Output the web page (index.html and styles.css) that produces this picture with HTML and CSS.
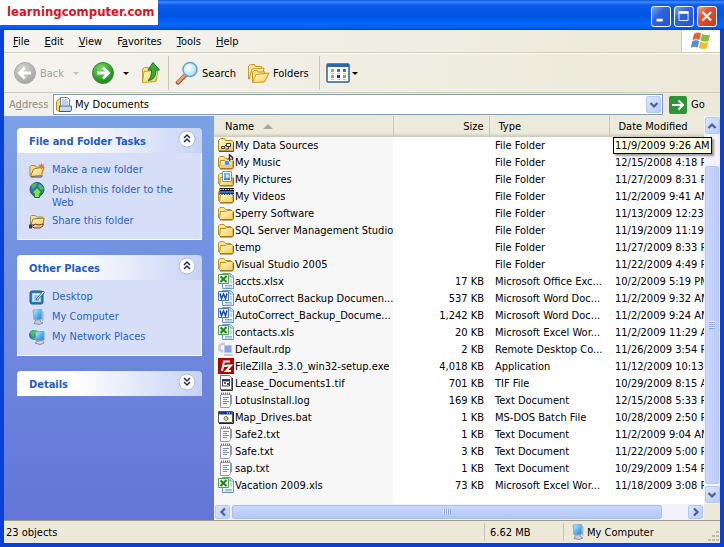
FILE: index.html
```html
<!DOCTYPE html>
<html lang="en">
<head>
<meta charset="utf-8">
<title>My Documents</title>
<link rel="stylesheet" href="styles.css">
</head>
<body>
<svg class="sprite" aria-hidden="true">
  <defs>
    <linearGradient id="gFold" x1="0" y1="0" x2="1" y2="1"><stop offset="0" stop-color="#fffbd0"/><stop offset="1" stop-color="#f3cb50"/></linearGradient>
    <radialGradient id="gGreen" cx=".4" cy=".3" r=".75"><stop offset="0" stop-color="#7fdc62"/><stop offset=".6" stop-color="#35a62c"/><stop offset="1" stop-color="#1d7d1c"/></radialGradient>
    <radialGradient id="gGray" cx=".4" cy=".3" r=".75"><stop offset="0" stop-color="#d4d4d2"/><stop offset="1" stop-color="#a2a2a0"/></radialGradient>
    <radialGradient id="gLens" cx=".4" cy=".4" r=".6"><stop offset="0" stop-color="#fff"/><stop offset="1" stop-color="#a5def5"/></radialGradient>
    <linearGradient id="gScr" x1="0" y1="0" x2="1" y2="1"><stop offset="0" stop-color="#c3f0ff"/><stop offset=".5" stop-color="#5ab8f0"/><stop offset="1" stop-color="#2273cf"/></linearGradient>
    <symbol id="folder" viewBox="0 0 16 16">
      <path d="M.5 13V4L2 2.500h4L7.500 4.500h5l1 1V7" fill="#fbe58c" stroke="#c39224"/>
      <path d="M1.500 14 2.500 6.500H8l1-1h5l1 1v7l-1 1H2z" fill="url(#gFold)" stroke="#b98a1e"/>
      <path d="M2 15h12.500l1-1.500V7" fill="none" stroke="#8a6a1b"/>
    </symbol>
    <symbol id="data" viewBox="0 0 16 16">
      <path d="M.5 13.500v-10l2-2h4l1 2h6l2 1.500v9z" fill="url(#gFold)" stroke="#a98620"/>
      <path d="M3.500 9.500h3v2h-3zM8.500 6.500h4v3h-4zM6.500 9.500 8.500 8M10.500 10v2h-3" fill="#fff" stroke="#333"/>
      <path d="M1 14.500h14.500V5" fill="none" stroke="#6d5413"/>
    </symbol>
    <symbol id="music" viewBox="0 0 16 16">
      <use href="#folder"/>
      <path d="M11.500 8V.8l3 2.500V6" fill="none" stroke="#28365f" stroke-width="1.500"/>
      <circle cx="9" cy="9" r="2.800" fill="#4b8de0" stroke="#d7e8ff"/><path d="M3 11h10v3H3z" fill="#f9c56e"/>
    </symbol>
    <symbol id="pics" viewBox="0 0 16 16">
      <use href="#folder"/>
      <path d="M4.500.5h9v10h-9z" fill="#fff" stroke="#6f95c4"/><path d="M6 2h6v6.500H6z" fill="#69b7ee"/><path d="M8 3.500h3v3H8z" fill="#d5ecff"/><path d="M6 7.500h6V9H6z" fill="#3e83b0"/>
    </symbol>
    <symbol id="video" viewBox="0 0 16 16">
      <use href="#folder"/>
      <path d="M1.500 0H16v7H1.500z" fill="#111"/><path d="M2 3h14v2.500H2z" fill="#3c6ec4"/><path d="M2 1.500h14M2 6.500h14" stroke="#fff" stroke-dasharray="1.500 1"/>
    </symbol>
    <symbol id="page" viewBox="0 0 16 16">
      <path d="M4.500.5h8l3 3v12h-11z" fill="#eef6ff" stroke="#6c96c8"/><path d="M12 .5V4h3.500" fill="#fff" stroke="#6c96c8"/>
      <path d="M12 7h2M12 9h2M7 12.500h7M7 14h7" stroke="#8fb0dc"/>
    </symbol>
    <symbol id="xls" viewBox="0 0 16 16"><use href="#page"/><path d="M.5 1.500h10v9H.5z" fill="#e3f6dc" stroke="#57a552"/><path d="M2.500 3.500 8.500 9M8.500 3 2.500 9" stroke="#23822b" stroke-width="2"/></symbol>
    <symbol id="doc" viewBox="0 0 16 16"><use href="#page"/><path d="M.5 1.500h10v9H.5z" fill="#e3eeff" stroke="#4c7cc4"/><path d="M2 3.500 3.500 8.500 5.500 4 7.500 8.500 9 3.500" fill="none" stroke="#214d9d" stroke-width="1.500"/></symbol>
    <symbol id="rdp" viewBox="0 0 16 16"><path d="M2 10C0 5 3 2 7 3M2 9l3 2" fill="none" stroke="#c9cfdf" stroke-width="3"/><path d="M6.500 4.500h7v7h-7z" fill="#8d9ff0" stroke="#b8c4ec"/><path d="M6 13h9v2H6z" fill="#c8cad5"/></symbol>
    <symbol id="fz" viewBox="0 0 16 16"><path d="M0 0h16v16H0z" fill="#b20000"/><path d="M4 13 6 3.500h6M5 8h4M8.500 7.500h4.500l-5 5.500h5" fill="none" stroke="#fff" stroke-width="2"/></symbol>
    <symbol id="tif" viewBox="0 0 16 16"><path d="M2.500.5h9l2 2v12h-11z" fill="#fff" stroke="#777"/><path d="M3 15.500h11.500V3" fill="none" stroke="#333"/><path d="M4 4h8v2H4z" fill="#173b9c"/><path d="M4.500 6h7v5h-7z" fill="#fff" stroke="#444"/><path d="M6 7h2v2H6z" fill="#d33"/><path d="M9 8h2v2H9z" fill="#24c"/></symbol>
    <symbol id="txt" viewBox="0 0 16 16"><path d="M2.500 2.500h10v11l-1.500 2H2.500z" fill="#f6fbff" stroke="#9a9ca0"/><path d="M3 1.500h10" stroke="#8a7a42" stroke-width="2" stroke-dasharray="1 1"/><path d="M5 5.500h6M5 7.500h4M5 9.500h6M5 11.500h4" stroke="#7d8fb0"/><path d="M13.500 3v9" stroke="#999"/></symbol>
    <symbol id="bat" viewBox="0 0 16 16"><path d="M.5 2.500h14v11H.5z" fill="#fff" stroke="#555"/><path d="M1 3h13v2.500H1z" fill="#17379d"/><path d="M9 4h1M11 4h1M13 4h.5" stroke="#fff"/><path d="M15.500 3v11.500H1" fill="none" stroke="#222"/><circle cx="8" cy="9.500" r="2" fill="#e9d96a" stroke="#444" stroke-dasharray="1.500 .5"/></symbol>
    <symbol id="newf" viewBox="0 0 16 16"><path d="M1 14V4.500l1-1h4l1 1.500h5V8" fill="#f8dc86" stroke="#b08a3c"/><path d="M1.500 14.500 4.500 7l10.500-2-2.500 8.500z" fill="url(#gFold)" stroke="#a1762c"/><path d="m12.500 1 .8 1.800 2.200-.3-1.200 1.800L15.500 6l-2.200-.1-.8 1.800-.9-1.800-2.100.1 1.200-1.700L9.500 2.500l2.200.3z" fill="#f0742e"/><path d="M2 15h10.500l1-1.500" fill="none" stroke="#544"/></symbol>
    <symbol id="globe" viewBox="0 0 16 16"><circle cx="8" cy="7.500" r="7" fill="#2b76c4" stroke="#20578f"/><path d="M2 4c2-3 4-3 6-3l-1 3-3 3zM10 2c3 1 4 3 5 5l-3 1-3-3z" fill="#51bd4b"/><path d="M8 5.500 13.500 11H11l-.5 4.500h-5L5 11H2.500z" fill="#7fe05a" stroke="#1d6f25"/></symbol>
    <symbol id="share" viewBox="0 0 16 16"><path d="M1.500 12V3.500l1-1h4l1 1.500h6V7" fill="#f9e19a" stroke="#a98a48"/><path d="M2 11.500 4 6l11-1-1 7z" fill="url(#gFold)" stroke="#98773a"/><path d="M1 13h3l2-2 4 1 4-1v2l-3 2H5l-1-1H1z" fill="#eec07d" stroke="#6a5336"/><path d="M0 11.500h3v4H0z" fill="#30405c"/></symbol>
    <symbol id="desk" viewBox="0 0 16 16"><rect x="1" y="2" width="13" height="13" rx="2" fill="#2c7db8" stroke="#1b5c8f"/><path d="M3.500 4.500h8v8h-8z" fill="#f4fbff" stroke="#a6d5ee"/><path d="M5 7h4M5 9h3M5 11h5" stroke="#4e8bb5"/><path d="M7 10.500 14 2l1.500 1.500-7 7.500z" fill="#fff" stroke="#31628a"/></symbol>
    <symbol id="comp" viewBox="0 0 16 16"><path d="M4 1 12.500.5 13 10l-8 1z" fill="url(#gScr)" stroke="#8fa9cb"/><path d="M13 1.500 14.500 3v8L13 12z" fill="#a8b0c5"/><path d="m7 11 4-.5.5 2L14 14l-4 1.500-5-1z" fill="#c9ccd8" stroke="#8b90a6"/></symbol>
    <symbol id="net" viewBox="0 0 16 16"><circle cx="5" cy="6" r="5" fill="#287dc5"/><path d="M1 4c2-3 5-4 7-2L6 5l-2 4zM3 10l3-2v3z" fill="#4cc04b"/><path d="m6 3 9-.5V11l-8 .5z" fill="url(#gScr)" stroke="#7e9cc0"/><path d="m9 12 4-.5L15 14l-4 1.500-5-1.500z" fill="#d6d8e0" stroke="#868ca4"/></symbol>
    <symbol id="mydocs" viewBox="0 0 16 16"><path d="M.5 13V4.500L2.500 2h4v12H2z" fill="#fbdc6c" stroke="#b28c2b"/><path d="M4.500.5h7l2 2V11h-9z" fill="#f4f8ff" stroke="#7187ad"/><path d="M6 3h5M6 5h6M6 7h6" stroke="#8ba6d6"/><path d="M3.500 14.500V9h12v4l-1.500 1.500z" fill="#c5d9f2" stroke="#47679b"/><path d="M3 14.500h11.500" stroke="#3d5486"/></symbol>
    <symbol id="up2" viewBox="0 0 18 18"><circle cx="9" cy="9" r="8" fill="#fff" stroke="#b3bbd8"/><path d="m6 8 3-3 3 3M6 12l3-3 3 3" fill="none" stroke="#1d2c5e" stroke-width="1.500"/></symbol>
    <symbol id="down2" viewBox="0 0 18 18"><circle cx="9" cy="9" r="8" fill="#fff" stroke="#b3bbd8"/><path d="m6 5 3 3 3-3M6 9l3 3 3-3" fill="none" stroke="#1d2c5e" stroke-width="1.500"/></symbol>
    <symbol id="chev" viewBox="0 0 10 10"><path d="m1.500 3 3.500 3.500L8.500 3" fill="none" stroke="#4d6185" stroke-width="2.200"/></symbol>
  </defs>
</svg>

<div class="window">
  <header class="titlebar">
    <strong class="brand">learningcomputer.com</strong>
    <div class="controls">
      <button class="ctl" aria-label="Minimize"><svg viewBox="0 0 20 20"><path d="M5 14h7" stroke="#fff" stroke-width="3"/></svg></button>
      <button class="ctl" aria-label="Maximize"><svg viewBox="0 0 20 20"><path d="M4.500 5h10v9.500h-10z" fill="none" stroke="#fff"/><path d="M4 5.500h11" stroke="#fff" stroke-width="3"/></svg></button>
      <button class="ctl close" aria-label="Close"><svg viewBox="0 0 20 20"><path d="m5 5 9.500 9.500M14.500 5 5 14.500" stroke="#fff" stroke-width="2.200"/></svg></button>
    </div>
  </header>

  <div class="frame">
    <nav class="menubar">
      <button><u>F</u>ile</button><button><u>E</u>dit</button><button><u>V</u>iew</button><button>F<u>a</u>vorites</button><button><u>T</u>ools</button><button><u>H</u>elp</button>
      <span class="flag"><svg viewBox="0 0 20 18"><path d="M3 2q4-2.500 7-.5L8.500 8Q5 6.500 1.500 8.300z" fill="#e9602e"/><path d="M11 2q4 2 8 .2L17.500 9q-4 1.500-8-.5z" fill="#86bd3c"/><path d="M1.200 9.300q4-2 7-.2L6.700 15.500q-3-1.800-7 .2z" fill="#4f8ee0"/><path d="M9.300 9.500q4 2 8 .5l-1.600 6.500q-4 1.600-8-.7z" fill="#f5be2c"/></svg></span>
    </nav>

    <div class="toolbar">
      <button class="tool back" disabled><svg class="round" viewBox="0 0 24 24"><circle cx="12" cy="12" r="10.500" fill="url(#gGray)" stroke="#a9a9a6"/><path d="M18 12H7m5-5.500L6.500 12l5.500 5.500" fill="none" stroke="#fff" stroke-width="2.800"/></svg>Back<i class="caret"></i></button>
      <button class="tool fwd" aria-label="Forward"><svg class="round" viewBox="0 0 24 24"><circle cx="12" cy="12" r="10.500" fill="url(#gGreen)" stroke="#338a30"/><path d="M6 12h11m-5-5.500 5.500 5.500-5.500 5.500" fill="none" stroke="#fff" stroke-width="2.800"/></svg><i class="caret"></i></button>
      <button class="tool up" aria-label="Up"><svg viewBox="0 0 22 24"><path d="M2.500 21V8l2-1.500h4l1 2h5" fill="#f9e48e" stroke="#c49d2c"/><path d="M2.500 21.500 4 10.500l14-1.500-2 11.500z" fill="url(#gFold)" stroke="#c49d2c"/><path d="M8 19.500q3.500-2 3.500-10.500H8l5-7.500 6.500 7.500H16q0 10-8 10.500z" fill="#36ab35" stroke="#17751c"/></svg></button>
      <i class="sep"></i>
      <button class="tool search"><svg viewBox="0 0 24 24"><path d="M3 21.500 10 14.500" stroke="#9d5a34" stroke-width="4.500" stroke-linecap="round"/><path d="M3 21 10 14" stroke="#e6a276" stroke-width="2.500" stroke-linecap="round"/><circle cx="15" cy="8.500" r="7" fill="url(#gLens)" stroke="#6f9fc9" stroke-width="1.500"/></svg>Search</button>
      <button class="tool folders"><svg viewBox="0 0 24 24"><path d="M2.500 18V5l2-1.500h4l1 2h6V9" fill="#fbe58c" stroke="#c79a2c"/><path d="M3 18.500 6 8l12-1-1 5" fill="url(#gFold)" stroke="#c79a2c"/><path d="M6.500 21V11L8 9.500h3l1 1.500h7v3" fill="#fbe58c" stroke="#c79a2c"/><path d="M6.500 21.500 10 13.500 23 12l-4.500 9z" fill="url(#gFold)" stroke="#c79a2c"/></svg>Folders</button>
      <i class="sep"></i>
      <button class="tool views" aria-label="Views"><svg viewBox="0 0 24 20"><rect x="1" y="1" width="22" height="18" rx="1" fill="#fff" stroke="#28629f" stroke-width="1.500"/><path d="M1 1h22v3H1z" fill="#2b66ae"/><path d="M5 6h3v3H5z" fill="#999fb8"/><path d="M11 6h3v3h-3z" fill="#3572c9"/><path d="M17 6h3v3h-3z" fill="#2f9635"/><path d="M5 12h3v3H5z" fill="#e58a69"/><path d="M11 12h3v3h-3z" fill="#32258f"/><path d="M17 12h3v3h-3z" fill="#b6a12f"/><path d="M5 10.500h3m3 0h3m3 0h3M5 16.500h3m3 0h3m3 0h3" stroke="#bcc3d4"/></svg><i class="caret"></i></button>
    </div>

    <form class="address">
      <label for="addr">A<u>d</u>dress</label>
      <div class="combo"><svg class="ico"><use href="#mydocs"/></svg><input id="addr" type="text" value="My Documents"><button type="button" class="sbtn" aria-label="Show history"><svg><use href="#chev"/></svg></button></div>
      <button type="button" class="go"><svg viewBox="0 0 18 18"><rect width="18" height="18" rx="2" fill="#2d9238"/><path d="M3 9h11M9.500 4.500 14 9l-4.500 4.500" fill="none" stroke="#fff" stroke-width="2"/></svg>Go</button>
    </form>

    <main class="content">
      <aside class="side">
        <section class="panel">
          <h2>File and Folder Tasks<button aria-label="Collapse"><svg><use href="#up2"/></svg></button></h2>
          <ul>
            <li><a href="#"><svg class="ico"><use href="#newf"/></svg>Make a new folder</a></li>
            <li><a href="#"><svg class="ico"><use href="#globe"/></svg>Publish this folder to the Web</a></li>
            <li><a href="#"><svg class="ico"><use href="#share"/></svg>Share this folder</a></li>
          </ul>
        </section>
        <section class="panel">
          <h2>Other Places<button aria-label="Collapse"><svg><use href="#up2"/></svg></button></h2>
          <ul>
            <li><a href="#"><svg class="ico"><use href="#desk"/></svg>Desktop</a></li>
            <li><a href="#"><svg class="ico"><use href="#comp"/></svg>My Computer</a></li>
            <li><a href="#"><svg class="ico"><use href="#net"/></svg>My Network Places</a></li>
          </ul>
        </section>
        <section class="panel">
          <h2>Details<button aria-label="Expand"><svg><use href="#down2"/></svg></button></h2>
        </section>
      </aside>

      <div class="list">
        <div class="view">
          <table>
            <colgroup><col class="c-name"><col class="c-size"><col class="c-type"><col></colgroup>
            <thead><tr><th>Name<i class="sort"></i></th><th>Size</th><th>Type</th><th>Date Modified</th></tr></thead>
            <tbody>
              <tr><td><svg class="ico"><use href="#data"/></svg>My Data Sources</td><td></td><td>File Folder</td><td class="hot"><span class="tip">11/9/2009 9:26 AM</span></td></tr>
              <tr><td><svg class="ico"><use href="#music"/></svg>My Music</td><td></td><td>File Folder</td><td>12/15/2008 4:18 PM</td></tr>
              <tr><td><svg class="ico"><use href="#pics"/></svg>My Pictures</td><td></td><td>File Folder</td><td>11/27/2009 8:31 PM</td></tr>
              <tr><td><svg class="ico"><use href="#video"/></svg>My Videos</td><td></td><td>File Folder</td><td>11/2/2009 9:41 AM</td></tr>
              <tr><td><svg class="ico"><use href="#folder"/></svg>Sperry Software</td><td></td><td>File Folder</td><td>11/13/2009 12:23 PM</td></tr>
              <tr><td><svg class="ico"><use href="#folder"/></svg>SQL Server Management Studio</td><td></td><td>File Folder</td><td>11/19/2009 11:19 AM</td></tr>
              <tr><td><svg class="ico"><use href="#folder"/></svg>temp</td><td></td><td>File Folder</td><td>11/27/2009 8:33 PM</td></tr>
              <tr><td><svg class="ico"><use href="#folder"/></svg>Visual Studio 2005</td><td></td><td>File Folder</td><td>11/22/2009 4:49 PM</td></tr>
              <tr><td><svg class="ico"><use href="#xls"/></svg>accts.xlsx</td><td>17 KB</td><td>Microsoft Office Exc...</td><td>10/2/2009 5:19 PM</td></tr>
              <tr><td><svg class="ico"><use href="#doc"/></svg>AutoCorrect Backup Documen...</td><td>537 KB</td><td>Microsoft Word Doc...</td><td>11/2/2009 9:32 AM</td></tr>
              <tr><td><svg class="ico"><use href="#doc"/></svg>AutoCorrect_Backup_Docume...</td><td>1,242 KB</td><td>Microsoft Word Doc...</td><td>11/2/2009 9:24 AM</td></tr>
              <tr><td><svg class="ico"><use href="#xls"/></svg>contacts.xls</td><td>20 KB</td><td>Microsoft Excel Wor...</td><td>11/2/2009 11:29 AM</td></tr>
              <tr><td><svg class="ico"><use href="#rdp"/></svg>Default.rdp</td><td>2 KB</td><td>Remote Desktop Co...</td><td>11/26/2009 3:54 PM</td></tr>
              <tr><td><svg class="ico"><use href="#fz"/></svg>FileZilla_3.3.0_win32-setup.exe</td><td>4,018 KB</td><td>Application</td><td>11/12/2009 10:13 AM</td></tr>
              <tr><td><svg class="ico"><use href="#tif"/></svg>Lease_Documents1.tif</td><td>701 KB</td><td>TIF File</td><td>10/29/2009 8:15 AM</td></tr>
              <tr><td><svg class="ico"><use href="#txt"/></svg>LotusInstall.log</td><td>169 KB</td><td>Text Document</td><td>12/15/2008 5:33 PM</td></tr>
              <tr><td><svg class="ico"><use href="#bat"/></svg>Map_Drives.bat</td><td>1 KB</td><td>MS-DOS Batch File</td><td>10/28/2009 2:50 PM</td></tr>
              <tr><td><svg class="ico"><use href="#txt"/></svg>Safe2.txt</td><td>1 KB</td><td>Text Document</td><td>11/2/2009 9:04 AM</td></tr>
              <tr><td><svg class="ico"><use href="#txt"/></svg>Safe.txt</td><td>3 KB</td><td>Text Document</td><td>11/22/2009 5:00 PM</td></tr>
              <tr><td><svg class="ico"><use href="#txt"/></svg>sap.txt</td><td>1 KB</td><td>Text Document</td><td>10/29/2009 1:54 PM</td></tr>
              <tr><td><svg class="ico"><use href="#xls"/></svg>Vacation 2009.xls</td><td>73 KB</td><td>Microsoft Excel Wor...</td><td>11/18/2009 3:08 PM</td></tr>
            </tbody>
          </table>
          <div class="filler"></div>
        </div>
        <div class="vbar"><button class="sbtn" aria-label="Scroll up"><svg class="r180"><use href="#chev"/></svg></button><div class="vthumb"><i class="grip"></i></div><button class="sbtn" aria-label="Scroll down"><svg><use href="#chev"/></svg></button></div>
        <div class="hbar"><button class="sbtn" aria-label="Scroll left"><svg class="r90"><use href="#chev"/></svg></button><div class="hthumb"><i class="grip"></i></div><button class="sbtn" aria-label="Scroll right"><svg class="r270"><use href="#chev"/></svg></button></div>
        <div class="corner"></div>
      </div>
    </main>

    <footer class="status">
      <span class="count">23 objects</span><span class="bytes">6.62 MB</span><span class="zone"><svg class="ico"><use href="#comp"/></svg>My Computer</span>
      <svg class="resize" viewBox="0 0 12 12"><path d="M8 0h3v2H8zM4 4h3v2H4zM8 4h3v2H8zM0 8h3v2H0zM4 8h3v2H4zM8 8h3v2H8z" fill="#bdb9a8"/></svg>
    </footer>
  </div>
</div>
</body>
</html>
```
FILE: styles.css
```css
:root {
  --face: #ece9d8;
  --ui: "DejaVu Sans Condensed", "Noto Sans", sans-serif;
}
* { box-sizing: border-box; }
body {
  margin: 0;
  font: 11px/13px var(--ui);
  color: #000;
}
button, input { font: inherit; color: inherit; border: 0; padding: 0; margin: 0; background: none; }
svg { display: block; flex: none; }
.sprite { position: absolute; width: 0; height: 0; }
.ico { width: 16px; height: 16px; }

.window {
  display: flex;
  flex-direction: column;
  height: 100vh;
  background: #0a3fd8;
}
.titlebar {
  display: flex;
  justify-content: space-between;
  height: 30px;
  background: linear-gradient(#0a52dc 0, #3a8cff 2px, #0a5ae8 5px, #0054e3 16px, #0466fb 24px, #0262f8 27px, #0144c8 30px);
}
.brand {
  height: 25px;
  padding: 0 3px 0 7px;
  background: #fff;
  color: #e0101c;
  font-size: 13px;
  line-height: 24px;
}
.controls { display: flex; gap: 3px; padding: 6px 7px 0 0; }
.ctl {
  width: 20px;
  height: 21px;
  border: 1px solid #fff;
  border-radius: 3px;
  background: linear-gradient(135deg, #7ea3f2, #2f62dd 40%, #2453d0);
}
.ctl.close { background: linear-gradient(135deg, #f0a188, #dc5333 40%, #c63a17); }
.ctl svg { width: 18px; height: 19px; }

.frame {
  flex: 1;
  min-height: 0;
  display: flex;
  flex-direction: column;
  margin: 0 4px 4px;
  background: var(--face);
}
.menubar {
  display: flex;
  gap: 15px;
  height: 23px;
  padding-left: 9px;
  border-bottom: 1px solid #cfccbb;
  background: linear-gradient(90deg, #f5f4f0, #ece9d8);
}
.flag { margin-left: auto; width: 39px; background: #fff; border-left: 1px solid #cfccbb; display: grid; place-items: center; }
.flag svg { width: 20px; height: 18px; }

.toolbar {
  display: flex;
  align-items: center;
  height: 40px;
  border-top: 1px solid #fff;
  border-bottom: 1px solid #cfccbb;
  background: linear-gradient(90deg, #f4f3ee, #ece9d8);
}
.tool { display: flex; align-items: center; }
.tool svg { width: 24px; height: 24px; }
.back { color: #a3a195; margin-left: 9px; gap: 3px; }
.back .caret { margin-left: 6px; color: #c4c2b8; }
.fwd { margin-left: 12px; gap: 8px; }
.tool.up svg { width: 22px; }
.up { margin-left: 11px; }
.sep { width: 1px; height: 34px; background: #c9c6b6; margin: 0 6px; }
.search { gap: 3px; margin-right: 10px; }
.folders { gap: 3px; margin-right: 4px; }
.views { gap: 2px; }
.tool.views svg { height: 20px; }
.caret { border: 3px solid transparent; border-top-color: currentColor; border-bottom: 0; }

.address { display: flex; height: 23px; padding: 1px 0; align-items: center; background: linear-gradient(90deg, #f1f0ea, #ece9d8); }
.address label { width: 49px; padding-left: 5px; color: #8f8d80; }
.combo {
  flex: 1;
  display: flex;
  align-items: center;
  height: 21px;
  padding: 0 1px 0 2px;
  border: 1px solid #7f9db9;
  background: #fff;
}
.combo input { flex: 1; min-width: 0; margin-left: 3px; height: 17px; outline: 0; }
.go { display: flex; align-items: center; gap: 4px; width: 57px; padding-left: 6px; }
.go svg { width: 18px; height: 18px; }
.sbtn {
  display: grid;
  place-items: center;
  width: 15px;
  height: 17px;
  border-radius: 2px;
  border: 1px solid #b4c8f6;
  background: linear-gradient(135deg, #dbe6ff, #b8ccfa);
}
.sbtn svg { width: 10px; height: 10px; }
.r180 { transform: rotate(180deg); }
.r90 { transform: rotate(90deg); }
.r270 { transform: rotate(270deg); }

.content { flex: 1; min-height: 0; display: flex; border-bottom: 1px solid #9d9a8b; }
.side {
  display: flex;
  flex-direction: column;
  gap: 15px;
  width: 210px;
  padding: 12px 12px 0 13px;
  background: linear-gradient(#7ba2e7, #6375d6);
}
.panel h2 {
  display: flex;
  align-items: center;
  justify-content: space-between;
  height: 25px;
  margin: 0;
  padding: 2px 6px 0 12px;
  border-radius: 4px 4px 0 0;
  background: linear-gradient(90deg, #fff 30%, #c6d3f7);
  color: #215dc6;
  font-size: 11px;
}
.panel h2 button { margin-top: -5px; }
.panel h2 svg { width: 18px; height: 18px; }
.panel ul {
  margin: 0;
  padding: 9px 11px 10px;
  border: 1px solid #fff;
  border-top: 0;
  background: #d6dff7;
  list-style: none;
  display: flex;
  flex-direction: column;
  gap: 4px;
}
.panel a { display: flex; gap: 7px; min-height: 16px; padding-top: 1px; color: #2d5fc0; text-decoration: none; }
.panel a svg { margin-top: -1px; }

.list { flex: 1; min-width: 0; display: grid; grid-template: 1fr 16px / 1fr 16px; background: #fff; }
.view { display: flex; flex-direction: column; min-width: 0; min-height: 0; }
table { width: 100%; table-layout: fixed; border-collapse: collapse; }
.c-name { width: 179px; }
.c-size { width: 96px; }
.c-type { width: 120px; }
th {
  height: 21px;
  padding: 0 0 1px 9px;
  font-weight: normal;
  text-align: left;
  white-space: nowrap;
  background: linear-gradient(#ebeadb 17px, #cbc7b8);
  border-right: 1px solid #c7c5b2;
}
th:first-child { padding-left: 11px; }
th:last-child { border-right: 0; }
th:nth-child(2), td:nth-child(2) { text-align: right; padding-right: 5px; }
.sort { display: inline-block; margin-left: 9px; border: 5px solid transparent; border-bottom-color: #aca899; border-top: 0; vertical-align: 1px; }
td { height: 17px; padding: 0 0 0 6px; line-height: 17px; white-space: nowrap; overflow: hidden; }
td:first-child { padding-left: 4px; background: #f7f7f7; }
td .ico { float: left; margin-right: 1px; }
td.hot { overflow: visible; padding-left: 4px; position: relative; }
.tip {
  position: absolute;
  top: 0;
  left: 4px;
  padding: 0 1px;
  border: 1px solid #000;
  background: #ffffe1;
  line-height: 15px;
  box-shadow: 2px 2px 2px #0006;
  z-index: 1;
}
.filler { flex: 1; width: 179px; background: #f7f7f7; }
.vbar { display: flex; flex-direction: column; align-items: center; padding: 1px 0; background: #f4f3fb; }
.vthumb { flex: 1; width: 14px; margin: 32px 0 2px; border: 1px solid #b7caf5; border-radius: 2px; background: linear-gradient(90deg, #cad8ff, #bccdfb); display: grid; place-items: center; }
.hbar { display: flex; align-items: center; padding: 0 1px; background: #f4f3fb; }
.hbar .sbtn { height: 14px; }
.hthumb { flex: 1; height: 14px; margin: 0 26px 0 2px; border: 1px solid #a9bef2; border-radius: 2px; background: linear-gradient(#cad8ff, #b4c7f8); display: grid; place-items: center; }
.grip { width: 8px; height: 6px; background: repeating-linear-gradient(90deg, #eef3ff 0 1px, #8ca4dd 1px 2px); }
.vthumb .grip { width: 6px; height: 8px; background: repeating-linear-gradient(#eef3ff 0 1px, #8ca4dd 1px 2px); }
.corner { background: var(--face); }

.status { display: flex; align-items: center; height: 22px; }
.status span { display: flex; align-items: center; height: 18px; border-left: 1px solid #c7c4b2; }
.status .count { flex: 1; padding-left: 2px; border: 0; }
.bytes { width: 79px; padding-left: 5px; }
.zone { width: 144px; padding-left: 5px; gap: 2px; }
.status .zone { margin-right: 0; }
.resize { width: 12px; height: 12px; margin-left: -12px; align-self: flex-end; }
.status .bytes { flex: none; }
.status .zone { width: 157px; }
```
